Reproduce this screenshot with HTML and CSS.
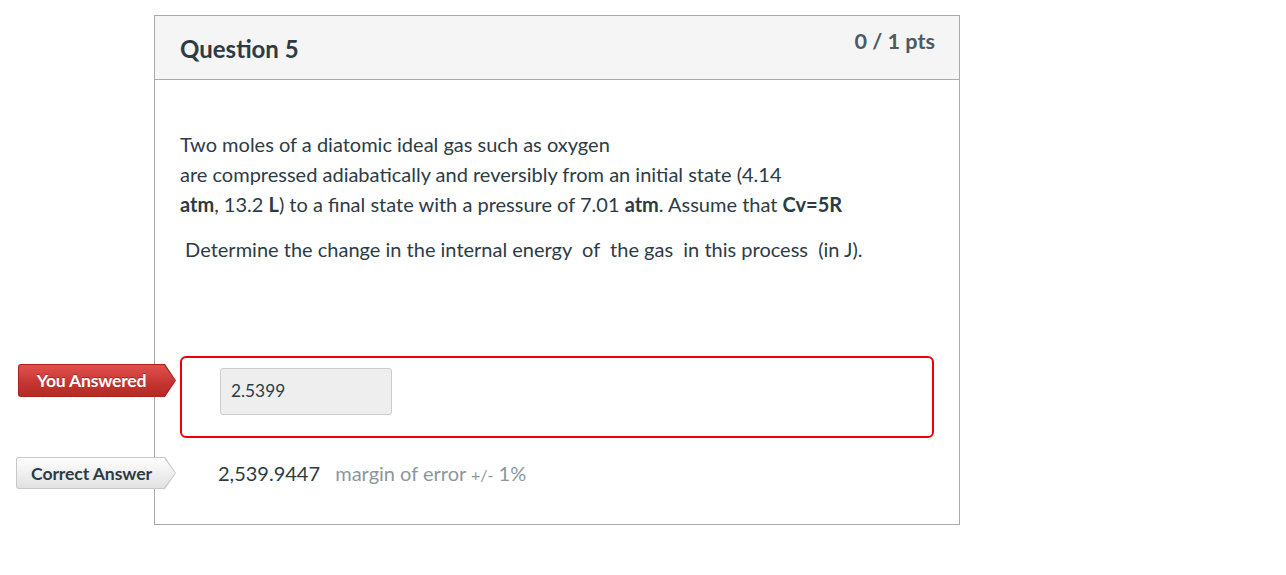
FILE: index.html
```html
<!DOCTYPE html>
<html>
<head>
<meta charset="utf-8">
<link rel="stylesheet" href="styles.css">
</head>
<body>
<div class="card">
  <div class="card-header">
    <h2 class="q-title">Question 5</h2>
    <div class="q-pts">0 / 1 pts</div>
  </div>
  <div class="card-body">
    <p class="q-text">Two moles of a diatomic ideal gas such as oxygen<br>are compressed adiabatically and reversibly from an initial state (4.14<br><b>atm</b>, 13.2 <b>L</b>) to a final state with a pressure of 7.01 <b>atm</b>. Assume that <b>Cv=5R</b></p>
    <p class="q-text q-text2">&nbsp;Determine the change in the internal energy&nbsp; of&nbsp; the gas&nbsp; in this process&nbsp; (in J).</p>
    <div class="answer-row">
      <div class="label label-wrong"><span>You Answered</span></div>
      <div class="answer-box">
        <div class="answer-input">2.5399</div>
      </div>
    </div>
    <div class="answer-row correct-row">
      <div class="label label-correct"><span>Correct Answer</span></div>
      <div class="correct-text">2,539.9447 <span class="margin">margin of error <small>+/-</small> 1%</span></div>
    </div>
  </div>
</div>
</body>
</html>
```

FILE: styles.css
```css
html, body {
  margin: 0;
  padding: 0;
  background: #fff;
}
body {
  font-family: Lato, "Open Sans", sans-serif;
  color: #2d3b45;
}
.card {
  margin: 15px 0 0 154px;
  width: 804px;
  height: 508px;
  border: 1px solid #aaaaaa;
  box-sizing: content-box;
}
.card-header {
  height: 63px;
  background: #f5f5f5;
  border-bottom: 1px solid #aaaaaa;
  display: flex;
  justify-content: space-between;
  align-items: flex-start;
  padding: 0 24px 0 25px;
}
.q-title {
  margin: 18px 0 0 0;
  font-size: 24px;
  font-weight: 700;
  color: #2d3b45;
  line-height: 30px;
}
.q-pts {
  margin-top: 12px;
  font-size: 21.6px;
  font-weight: 700;
  color: #4b5a64;
  line-height: 26px;
}
.card-body {
  padding: 49px 25px 0 25px;
}
.q-text {
  margin: 0;
  font-size: 20px;
  line-height: 30px;
  color: #2d3b45;
}
.q-text b {
  font-weight: 700;
}
.q-text2 {
  margin-top: 15px;
}
.answer-row {
  position: relative;
}
.answer-box {
  margin-top: 92px;
  height: 68px;
  border: 2px solid #ee0000;
  border-radius: 6px;
  padding: 10px 0 0 38px;
  box-sizing: content-box;
  width: 712px;
}
.answer-input {
  width: 160px;
  height: 45px;
  background: #eeeeee;
  border: 1px solid #cccccc;
  border-radius: 3px;
  font-size: 17.3px;
  line-height: 44px;
  padding-left: 10px;
  color: #2d3b45;
}
.label {
  position: absolute;
  left: -162px;
  width: 158px;
  height: 33px;
  clip-path: polygon(0 0, calc(100% - 11px) 0, 100% 50%, calc(100% - 11px) 100%, 0 100%);
  border-radius: 3px 0 0 3px;
  display: flex;
  align-items: center;
  font-size: 17.6px;
  font-weight: 700;
  box-sizing: border-box;
}
.label span {
  position: relative;
  z-index: 1;
  width: 147px;
  text-align: center;
}
.label::before {
  content: "";
  position: absolute;
  left: 1px;
  top: 1px;
  right: 1px;
  bottom: 1px;
  clip-path: polygon(0 0, calc(100% - 11px) 0, 100% 50%, calc(100% - 11px) 100%, 0 100%);
  border-radius: 2px 0 0 2px;
}
.label-wrong {
  top: 8px;
  background: #a9221e;
  color: #fff;
  letter-spacing: -0.2px;
}
.label-wrong span {
  text-shadow: 0 -1px 0 rgba(0,0,0,0.3);
}
.label-wrong::before {
  background: linear-gradient(#e3504c, #c33531 60%, #b52926);
}
.label-correct {
  top: -5px;
  left: -164px;
  width: 160px;
  height: 32px;
  background: #c8c8c8;
  color: #2d3b45;
  letter-spacing: -0.1px;
}
.label-correct span {
  width: 151px;
}
.label-correct::before {
  background: linear-gradient(#ffffff, #eeeeee 55%, #e2e2e2);
}
.correct-row {
  margin-top: 24px;
  padding-left: 38px;
}
.correct-text {
  font-size: 20px;
  line-height: 22px;
  color: #2d3b45;
}
.margin {
  color: #8b969e;
  margin-left: 10px;
}
.margin small {
  font-size: 16px;
}
```
